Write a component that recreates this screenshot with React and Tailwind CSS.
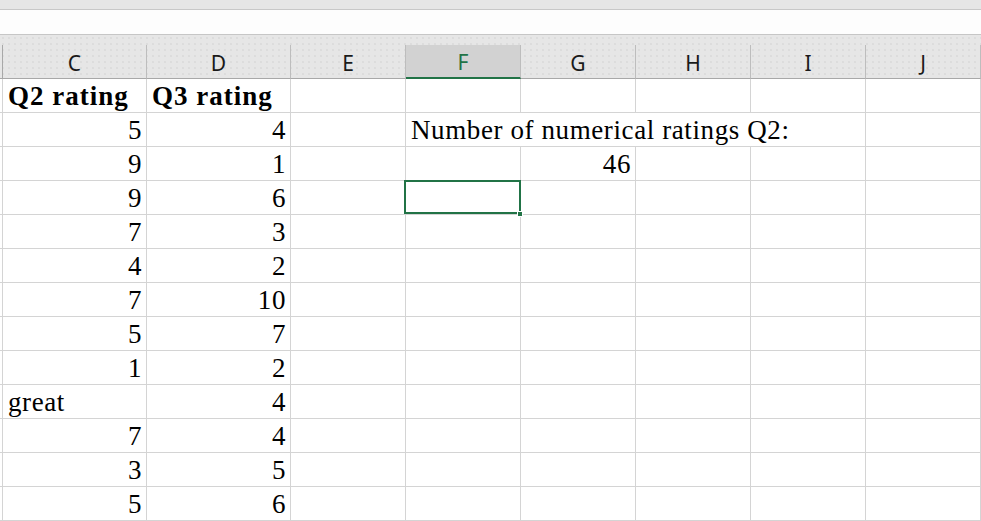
import React from 'react';

const COLS = ['C', 'D', 'E', 'F', 'G', 'H', 'I', 'J'];

// body rows: [C, D, extra] — numbers right aligned, text left aligned
const ROWS = [
  { c: 'Q2 rating', d: 'Q3 rating', bold: true },
  { c: 5, d: 4, note: true },
  { c: 9, d: 1, count: 46 },
  { c: 9, d: 6, selected: true },
  { c: 7, d: 3 },
  { c: 4, d: 2 },
  { c: 7, d: 10 },
  { c: 5, d: 7 },
  { c: 1, d: 2 },
  { c: 'great', d: 4 },
  { c: 7, d: 4 },
  { c: 3, d: 5 },
  { c: 5, d: 6 },
];

const grid = 'grid grid-cols-[3px_144px_144px_115px_115px_115px_115px_115px_115px]';
const cell = 'h-[34px] border-r border-b border-[#d4d4d4] flex items-end pb-[2px] whitespace-nowrap';

function Value({ v, bold }) {
  if (v === undefined || v === null) return <div className={cell} />;
  const isNum = typeof v === 'number';
  return (
    <div className={`${cell} ${isNum ? 'justify-end pr-[4px]' : 'justify-start pl-[5px]'} ${bold ? 'font-bold tracking-[1px]' : ''}`}>
      {v}
    </div>
  );
}

export default function App() {
  return (
    <div className="w-[981px] h-[521px] overflow-hidden bg-white text-[27px] leading-[28px] tracking-[0.6px] text-black font-['Liberation_Serif',serif]">
      {/* ribbon edge + formula bar */}
      <div className="h-[10px] bg-[#e6e6e6] border-b border-[#c8c8c8]" />
      <div className="h-[25px] bg-[#fdfdfd] border-b border-[#c6c6c6]" />

      {/* column headers */}
      <div className="bg-[#e6e6e6] bg-[radial-gradient(circle,#d2d2d2_0.5px,transparent_0.9px)] bg-[length:6px_6px]">
        <div className="h-[10px]" />
        <div className={`${grid} font-['Noto_Sans',sans-serif] text-[21px] tracking-normal text-[#1a1a1a]`}>
          <div className="h-[34px] border-r border-b border-[#a8a8a8]" />
          {COLS.map(col =>
            col === 'F' ? (
              <div key={col} className="h-[34px] border-r border-[#bdbdbd] border-b-2 border-b-[#217346] bg-[#d2d2d2] text-[#217346] flex items-center justify-center pt-[2px]">
                {col}
              </div>
            ) : (
              <div key={col} className="h-[34px] border-r border-[#bdbdbd] border-b border-b-[#a8a8a8] flex items-center justify-center pt-[2px]">
                {col}
              </div>
            )
          )}
        </div>
      </div>

      {/* sheet body */}
      {ROWS.map((r, i) => (
        <div key={i} className={grid}>
          <div className="h-[34px] border-r border-b border-[#d4d4d4]" />
          <Value v={r.c} bold={r.bold} />
          <Value v={r.d} bold={r.bold} />
          <div className={cell} />
          {r.note ? (
            <div className={`${cell} col-span-4 pl-[5px]`}>Number of numerical ratings Q2:</div>
          ) : (
            <>
              {r.selected ? (
                <div className={`${cell} relative`}>
                  <div className="absolute -top-[1px] -left-[2px] -right-[1px] bottom-0 border-2 border-[#217346]" />
                  <div className="absolute -right-[3px] -bottom-[3px] w-[6px] h-[6px] bg-[#217346] border border-white" />
                </div>
              ) : (
                <div className={cell} />
              )}
              <Value v={r.count} />
              <div className={cell} />
              <div className={cell} />
            </>
          )}
          <div className={cell} />
        </div>
      ))}
    </div>
  );
}
